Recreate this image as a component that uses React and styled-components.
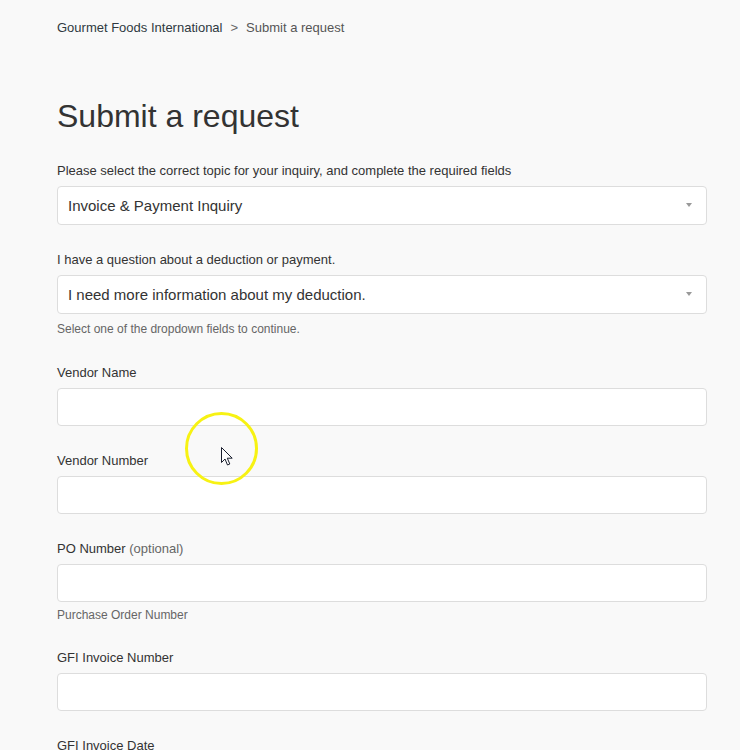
import React from "react";
import styled, { createGlobalStyle } from "styled-components";

const Global = createGlobalStyle`
  html, body { margin: 0; padding: 0; background: #f9f9f9; }
  body { font-family: "Liberation Sans", Arial, sans-serif; color: #333; }
  * { box-sizing: border-box; }
`;

const Page = styled.div`
  position: relative;
  padding: 19px 33px 0 57px;
  height: 750px;
  overflow: hidden;
`;

const Breadcrumbs = styled.nav`
  display: flex;
  align-items: center;
  gap: 8px;
  font-size: 13px;
  line-height: 18px;
  color: #555;
`;

const Crumb = styled.a`
  color: ${(p) => (p.$current ? "#555" : "#2f3941")};
  text-decoration: none;
`;

const Sep = styled.span`
  color: #666;
`;

const Title = styled.h1`
  margin: 59px 0 26px;
  font-size: 32px;
  font-weight: 400;
  line-height: 40px;
  color: #333;
`;

const Form = styled.form`
  display: flex;
  flex-direction: column;
  gap: 26px;
  width: 650px;
`;

const Field = styled.div`
  display: flex;
  flex-direction: column;
`;

const Label = styled.label`
  font-size: 13px;
  line-height: 18px;
  margin-bottom: 6px;
  color: #333;
`;

const Optional = styled.span`
  color: #666;
`;

const SelectBox = styled.div`
  position: relative;
  height: 39px;
  background: #fff;
  border: 1px solid #ddd;
  border-radius: 4px;
  display: flex;
  align-items: center;
  padding: 0 28px 0 10px;
  font-size: 15px;
  color: #333;
`;

const Arrow = styled.span`
  position: absolute;
  right: 14px;
  top: 16px;
  width: 0;
  height: 0;
  border-left: 3px solid transparent;
  border-right: 3px solid transparent;
  border-top: 4px solid #999;
`;

const Input = styled.input`
  height: 38px;
  background: #fff;
  border: 1px solid #ddd;
  border-radius: 4px;
  padding: 0 10px;
  font-family: inherit;
  font-size: 15px;
  outline: none;
`;

const Hint = styled.p`
  margin: ${(p) => (p.$afterSelect ? "7px 0 1px" : "5px 0 0")};
  font-size: 12px;
  line-height: 16px;
  color: #666;
`;

const Highlight = styled.div`
  position: absolute;
  left: 185px;
  top: 412px;
  width: 73px;
  height: 73px;
  border: 3px solid #f7f213;
  border-radius: 50%;
  pointer-events: none;
`;

const Pointer = styled.svg`
  position: absolute;
  left: 221px;
  top: 447px;
  pointer-events: none;
`;

function Select({ value }) {
  return (
    <SelectBox>
      {value}
      <Arrow />
    </SelectBox>
  );
}

export default function App() {
  return (
    <>
      <Global />
      <Page>
        <Breadcrumbs>
          <Crumb href="#">Gourmet Foods International</Crumb>
          <Sep>&gt;</Sep>
          <Crumb $current>Submit a request</Crumb>
        </Breadcrumbs>
        <Title>Submit a request</Title>
        <Form>
          <Field>
            <Label>Please select the correct topic for your inquiry, and complete the required fields</Label>
            <Select value="Invoice & Payment Inquiry" />
          </Field>
          <Field>
            <Label>I have a question about a deduction or payment.</Label>
            <Select value="I need more information about my deduction." />
            <Hint $afterSelect>Select one of the dropdown fields to continue.</Hint>
          </Field>
          <Field>
            <Label>Vendor Name</Label>
            <Input />
          </Field>
          <Field>
            <Label>Vendor Number</Label>
            <Input />
          </Field>
          <Field>
            <Label>
              PO Number <Optional>(optional)</Optional>
            </Label>
            <Input />
            <Hint>Purchase Order Number</Hint>
          </Field>
          <Field>
            <Label>GFI Invoice Number</Label>
            <Input />
          </Field>
          <Field>
            <Label>GFI Invoice Date</Label>
            <Input />
          </Field>
        </Form>
        <Highlight />
        <Pointer width="13" height="20" viewBox="0 0 13 20">
          <path d="M0.5 0.5 L0.5 15.5 L4 12 L6.5 18 L8.8 17 L6.3 11.2 L11.2 11.2 Z" fill="#fff" stroke="#1a1f2e" strokeWidth="1" strokeLinejoin="round" />
        </Pointer>
      </Page>
    </>
  );
}
